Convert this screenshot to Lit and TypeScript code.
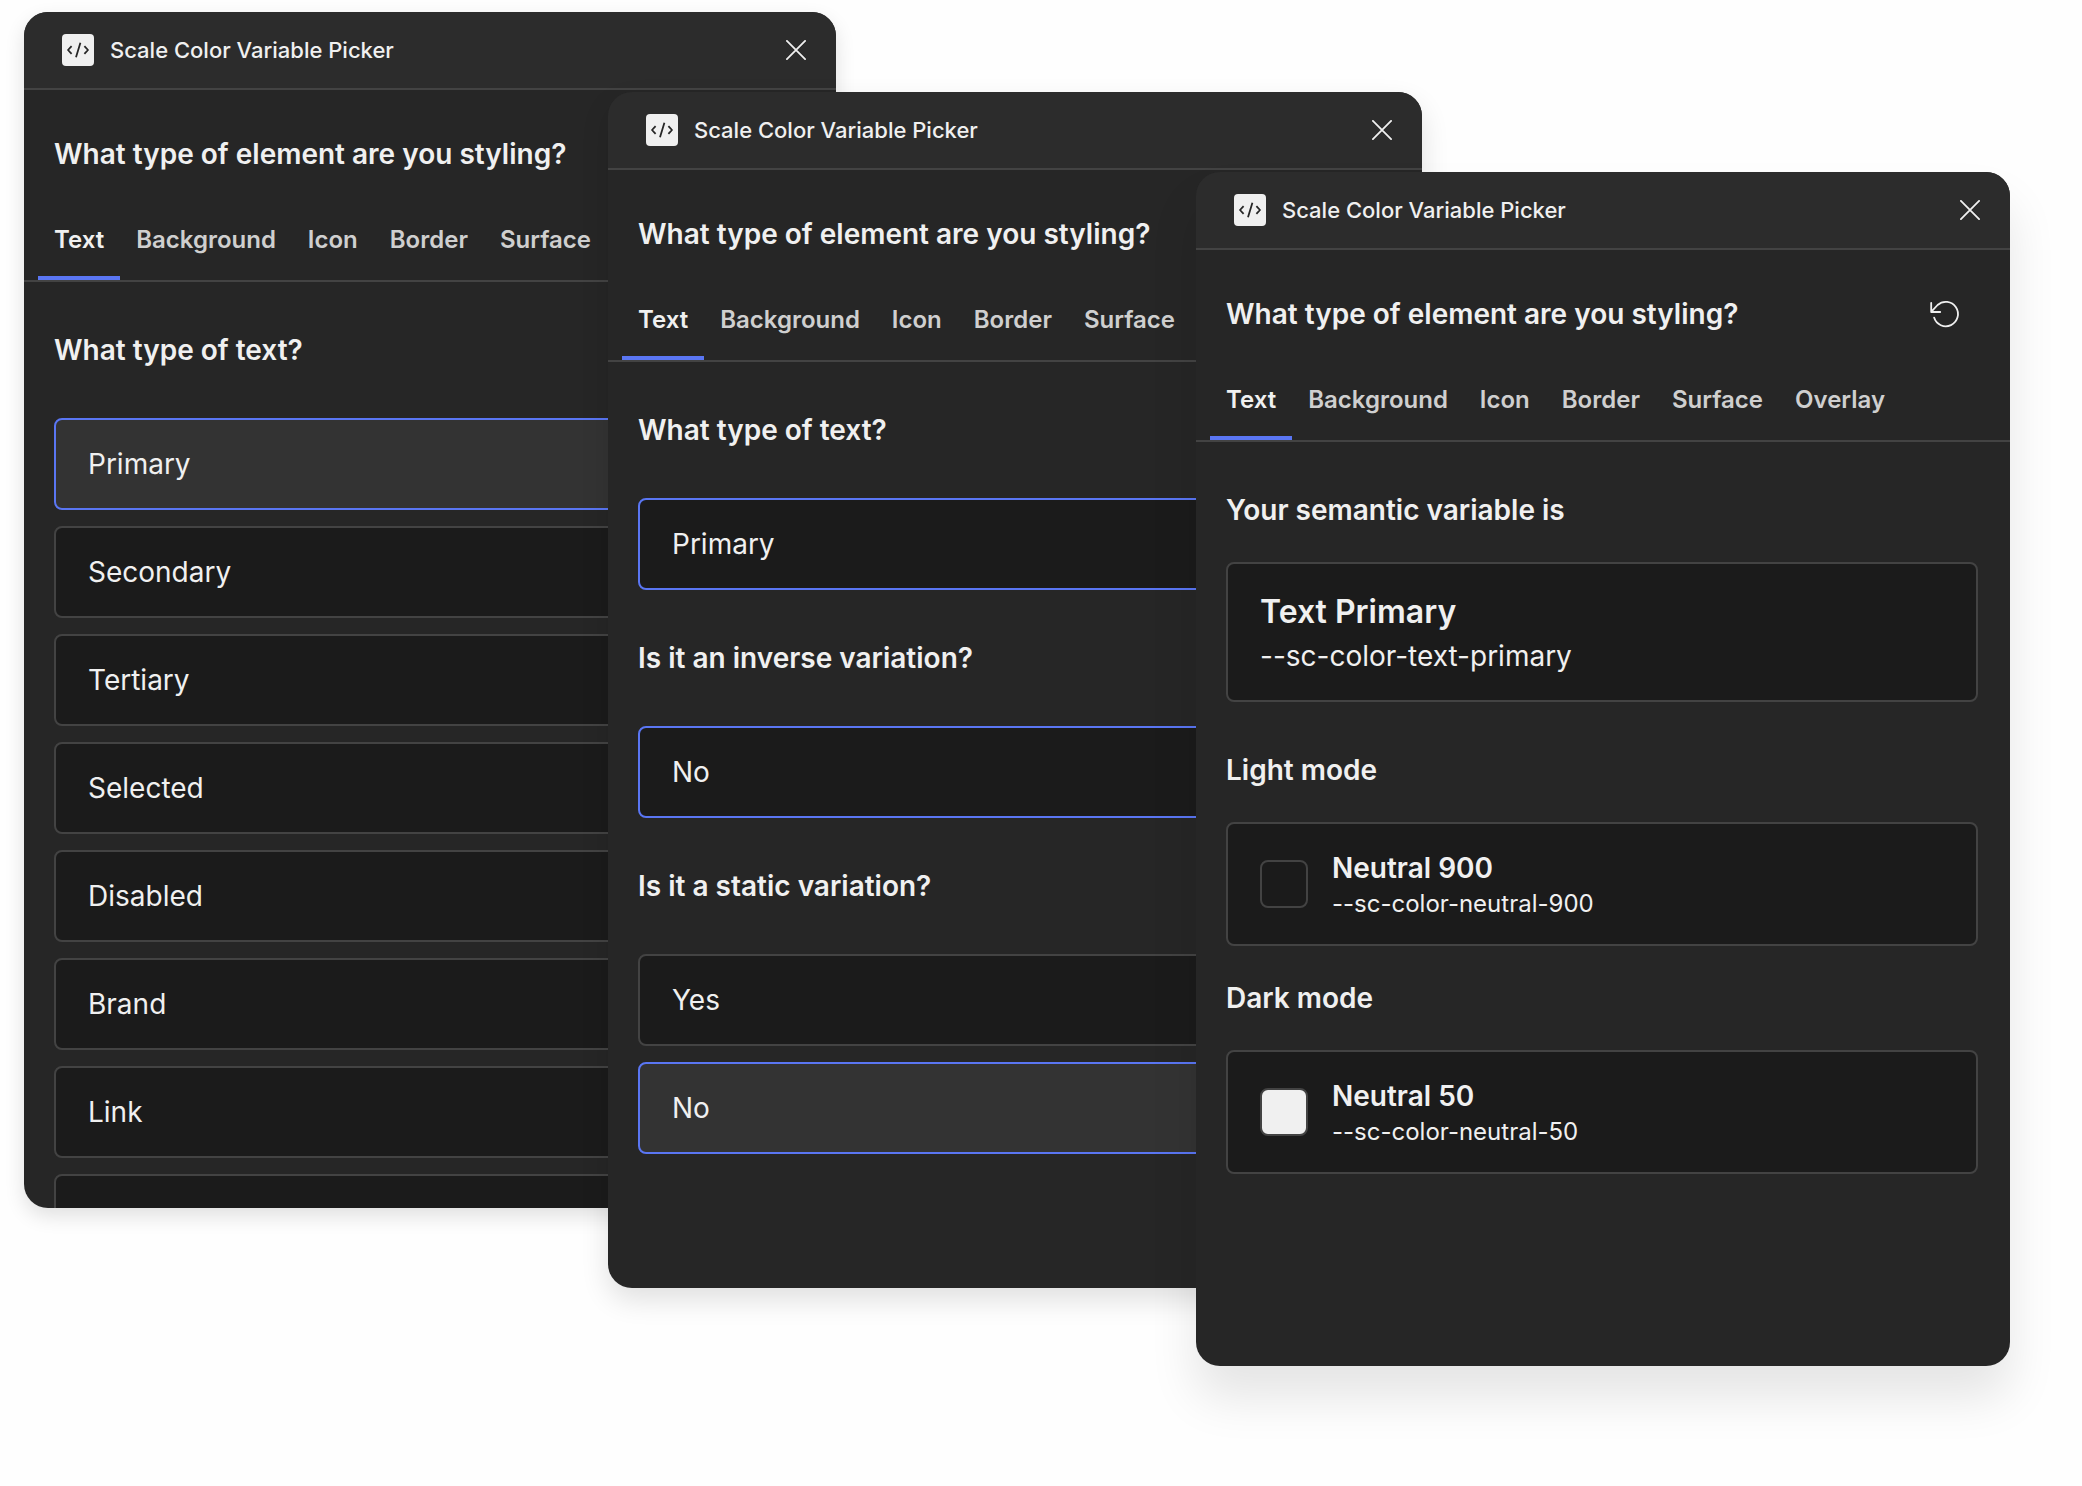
import { LitElement, html, css } from "lit";
import { customElement, property } from "lit/decorators.js";
import { classMap } from "lit/directives/class-map.js";
import { styleMap } from "lit/directives/style-map.js";

type OptionState = "default" | "answered" | "active";

interface Option {
  label: string;
  state?: OptionState;
}

interface Question {
  title: string;
  options: Option[];
}

interface PickerWindow {
  left: number;
  top: number;
  width: number;
  height: number;
  elevation: "low" | "medium" | "high";
  tabs: string[];
  questions?: Question[];
}

const TABS = ["Text", "Background", "Icon", "Border", "Surface"];

const WINDOWS: PickerWindow[] = [
  {
    left: 24,
    top: 12,
    width: 812,
    height: 1196,
    elevation: "low",
    tabs: TABS,
    questions: [
      {
        title: "What type of text?",
        options: [
          { label: "Primary", state: "active" },
          { label: "Secondary" },
          { label: "Tertiary" },
          { label: "Selected" },
          { label: "Disabled" },
          { label: "Brand" },
          { label: "Link" },
          { label: "" },
        ],
      },
    ],
  },
  {
    left: 608,
    top: 92,
    width: 814,
    height: 1196,
    elevation: "medium",
    tabs: TABS,
    questions: [
      { title: "What type of text?", options: [{ label: "Primary", state: "answered" }] },
      { title: "Is it an inverse variation?", options: [{ label: "No", state: "answered" }] },
      {
        title: "Is it a static variation?",
        options: [{ label: "Yes" }, { label: "No", state: "active" }],
      },
    ],
  },
  {
    left: 1196,
    top: 172,
    width: 814,
    height: 1194,
    elevation: "high",
    tabs: [...TABS, "Overlay"],
  },
];

const MODES = [
  { title: "Light mode", name: "Neutral 900", token: "--sc-color-neutral-900", color: "#1b1b1b" },
  { title: "Dark mode", name: "Neutral 50", token: "--sc-color-neutral-50", color: "#f0f0f0" },
];

@customElement("picker-questions")
export class PickerQuestions extends LitElement {
  @property({ attribute: false }) questions: Question[] = [];

  static styles = css`
    :host {
      display: block;
    }
    .question {
      padding-top: 48px;
    }
    .title {
      margin: 0;
      font-size: 28px;
      line-height: 40px;
      font-weight: 600;
    }
    .options {
      display: flex;
      flex-direction: column;
      gap: 16px;
      margin-top: 48px;
    }
    .option {
      min-height: 92px;
      padding: 24px 32px;
      border: 2px solid #434343;
      border-radius: 8px;
      background: #1b1b1b;
      color: inherit;
      font: inherit;
      font-size: 28px;
      line-height: 40px;
      text-align: left;
      cursor: pointer;
    }
    .option.answered,
    .option.active {
      border-color: #5a76f3;
    }
    .option.active {
      background: #333333;
    }
  `;

  render() {
    return this.questions.map(
      (question) => html`
        <section class="question">
          <h2 class="title">${question.title}</h2>
          <div class="options">
            ${question.options.map(
              (option) => html`
                <button
                  type="button"
                  class=${classMap({ option: true, [option.state ?? "default"]: true })}
                >${option.label}</button>
              `
            )}
          </div>
        </section>
      `
    );
  }
}

@customElement("picker-result")
export class PickerResult extends LitElement {
  static styles = css`
    :host {
      display: block;
      padding-top: 48px;
    }
    .title {
      margin: 0 0 32px;
      font-size: 28px;
      line-height: 40px;
      font-weight: 600;
    }
    .card {
      padding: 24px 32px;
      border: 2px solid #434343;
      border-radius: 8px;
      background: #1b1b1b;
    }
    .name,
    .token {
      margin: 0;
    }
    .semantic .name {
      font-size: 32px;
      line-height: 48px;
      font-weight: 600;
    }
    .semantic .token {
      font-size: 28px;
      line-height: 40px;
    }
    .modes {
      display: flex;
      flex-direction: column;
      gap: 32px;
      margin-top: 48px;
    }
    .mode {
      display: flex;
      align-items: center;
      gap: 24px;
    }
    .mode .name {
      font-size: 28px;
      line-height: 40px;
      font-weight: 600;
    }
    .mode .token {
      font-size: 24px;
      line-height: 32px;
    }
    .swatch {
      box-sizing: border-box;
      width: 48px;
      height: 48px;
      border: 2px solid #434343;
      border-radius: 8px;
    }
  `;

  render() {
    return html`
      <section>
        <h2 class="title">Your semantic variable is</h2>
        <div class="card semantic">
          <p class="name">Text Primary</p>
          <p class="token">--sc-color-text-primary</p>
        </div>
      </section>
      <div class="modes">
        ${MODES.map(
          (mode) => html`
            <section>
              <h2 class="title">${mode.title}</h2>
              <div class="card mode">
                <span class="swatch" style=${styleMap({ background: mode.color })}></span>
                <div>
                  <p class="name">${mode.name}</p>
                  <p class="token">${mode.token}</p>
                </div>
              </div>
            </section>
          `
        )}
      </div>
    `;
  }
}

@customElement("picker-window")
export class PickerWindowElement extends LitElement {
  @property({ attribute: false }) tabs: string[] = [];
  @property({ attribute: false }) questions?: Question[];

  static styles = css`
    :host {
      display: flex;
      flex-direction: column;
      overflow: hidden;
      border-radius: 24px;
      background: #262626;
      color: #f0f0f0;
    }
    .bar {
      display: flex;
      align-items: center;
      gap: 16px;
      flex: none;
      height: 76px;
      padding: 0 24px 0 38px;
      border-bottom: 2px solid #434343;
      background: #2c2c2c;
    }
    .logo {
      width: 32px;
      height: 32px;
      flex: none;
    }
    .app {
      flex: 1;
      margin: 0;
      font-size: 22px;
      line-height: 32px;
      font-weight: 500;
    }
    .icon-button {
      display: grid;
      place-items: center;
      width: 32px;
      height: 32px;
      padding: 0;
      border: 0;
      background: none;
      color: inherit;
      cursor: pointer;
    }
    .intro {
      display: flex;
      align-items: center;
      justify-content: space-between;
      flex: none;
      padding: 44px 48px 24px 30px;
    }
    .lead {
      margin: 0;
      font-size: 28px;
      line-height: 40px;
      font-weight: 600;
    }
    .tabs {
      display: flex;
      flex: none;
      padding: 0 14px;
      border-bottom: 2px solid #434343;
    }
    .tab {
      padding: 26px 16px 20px;
      border: 0;
      border-bottom: 4px solid transparent;
      background: none;
      color: #cfcfcf;
      font: inherit;
      font-size: 24px;
      line-height: 32px;
      font-weight: 600;
      cursor: pointer;
    }
    .tab.current {
      border-bottom-color: #5a76f3;
      color: #f0f0f0;
    }
    .content {
      padding: 0 32px 0 30px;
    }
  `;

  render() {
    return html`
      <header class="bar">
        <svg class="logo" viewBox="0 0 32 32" fill="none" aria-hidden="true">
          <rect width="32" height="32" rx="4" fill="#f0f0f0" />
          <path
            d="M9.6 12.2 6 16l3.6 3.8M22.4 12.2 26 16l-3.6 3.8M18.4 8.8l-4.4 14.4"
            stroke="#262626"
            stroke-width="1.8"
            stroke-linejoin="round"
          />
        </svg>
        <p class="app">Scale Color Variable Picker</p>
        <button type="button" class="icon-button" aria-label="Close">
          <svg width="20" height="20" viewBox="0 0 20 20" fill="none" aria-hidden="true">
            <path d="M.9.9l18.2 18.2M19.1.9.9 19.1" stroke="currentColor" stroke-width="1.8" stroke-linecap="round" />
          </svg>
        </button>
      </header>
      <div class="intro">
        <h1 class="lead">What type of element are you styling?</h1>
        <button type="button" class="icon-button" aria-label="Start over">
          <svg width="32" height="32" viewBox="0 0 32 32" fill="none" aria-hidden="true">
            <path
              d="M1.2 5v9h9M1.4 13.6 7.6 7A12.2 12.2 0 1 1 4.1 19.6"
              stroke="currentColor"
              stroke-width="1.8"
              stroke-linecap="round"
              stroke-linejoin="round"
            />
          </svg>
        </button>
      </div>
      <nav class="tabs" role="tablist">
        ${this.tabs.map(
          (tab, index) => html`
            <button
              type="button"
              role="tab"
              aria-selected=${index === 0 ? "true" : "false"}
              class=${classMap({ tab: true, current: index === 0 })}
            >${tab}</button>
          `
        )}
      </nav>
      <div class="content">
        ${this.questions
          ? html`<picker-questions .questions=${this.questions}></picker-questions>`
          : html`<picker-result></picker-result>`}
      </div>
    `;
  }
}

@customElement("app-root")
export class AppRoot extends LitElement {
  static styles = css`
    :host {
      display: block;
      position: relative;
      min-height: 100vh;
      overflow: hidden;
      background: #fefefe;
      font-family: Inter, "Liberation Sans", sans-serif;
    }
    .window {
      position: absolute;
    }
    .low {
      box-shadow: 0 8px 20px rgba(0, 0, 0, 0.12);
    }
    .medium {
      box-shadow: 0 12px 28px rgba(0, 0, 0, 0.12);
    }
    .high {
      box-shadow: 0 32px 48px rgba(0, 0, 0, 0.1);
    }
  `;

  render() {
    return WINDOWS.map(
      (item) => html`
        <picker-window
          class=${classMap({ window: true, [item.elevation]: true })}
          style=${styleMap({
            left: `${item.left}px`,
            top: `${item.top}px`,
            width: `${item.width}px`,
            height: `${item.height}px`,
          })}
          .tabs=${item.tabs}
          .questions=${item.questions}
        ></picker-window>
      `
    );
  }
}
